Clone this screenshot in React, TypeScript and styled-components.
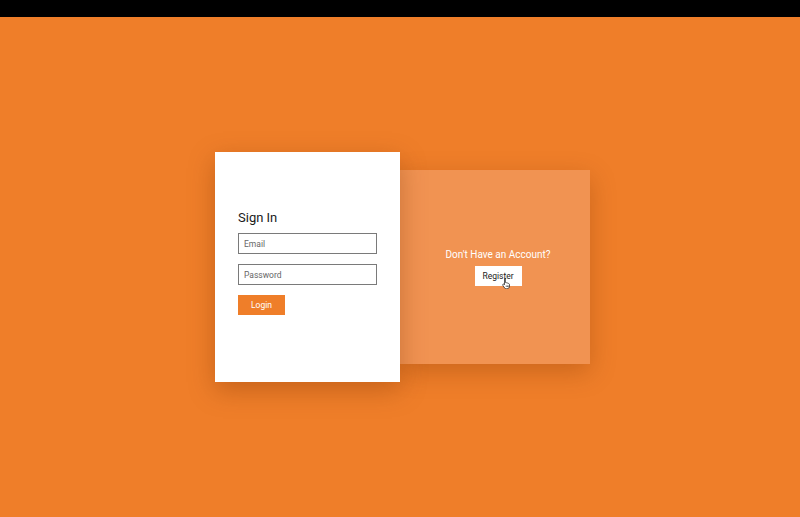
import React from 'react'
import styled, { createGlobalStyle } from 'styled-components'

const GlobalStyle = createGlobalStyle`
  html, body {
    margin: 0;
    padding: 0;
    background: #000;
    font-family: Roboto, "Noto Sans", sans-serif;
  }
`

const TopBar = styled.div`
  height: 17px;
  background: #000;
`

const Stage = styled.div`
  height: 500px;
  background: #ef7e29;
  display: flex;
  align-items: center;
  justify-content: center;
  padding-left: 5px;
  box-sizing: border-box;
`

const Wrapper = styled.div`
  display: flex;
  align-items: center;
`

const SignInCard = styled.div`
  position: relative;
  z-index: 2;
  width: 185px;
  height: 230px;
  background: #fff;
  box-shadow: 0 8px 24px rgba(120, 50, 0, 0.35);
  box-sizing: border-box;
  padding: 58px 23px 0;
  display: flex;
  flex-direction: column;
`

const Heading = styled.h2`
  margin: 0 0 7px;
  font-size: 13px;
  font-weight: 400;
  color: #1a1a1a;
  line-height: 16px;
`

const Field = styled.input`
  width: 139px;
  height: 21px;
  box-sizing: border-box;
  border: 1px solid #7a7a7a;
  padding: 0 5px;
  margin: 0 0 10px;
  font-family: inherit;
  font-size: 8.5px;
  color: #333;
  outline: none;
  &::placeholder {
    color: #666;
  }
`

const LoginButton = styled.button`
  width: 47px;
  height: 20px;
  border: none;
  background: #ef7e29;
  color: #fff;
  font-family: inherit;
  font-size: 8.5px;
  padding: 0;
  cursor: pointer;
`

const RegisterPanel = styled.div`
  position: relative;
  z-index: 1;
  width: 190px;
  height: 194px;
  background: #f19352;
  box-shadow: 0 8px 24px rgba(120, 50, 0, 0.3);
  display: flex;
  flex-direction: column;
  align-items: center;
  justify-content: center;
  padding-left: 6px;
  box-sizing: border-box;
`

const PanelText = styled.p`
  margin: 0 0 5px;
  color: #fff;
  font-size: 10px;
  font-weight: 400;
  line-height: 12px;
`

const RegisterButton = styled.button`
  position: relative;
  width: 47px;
  height: 20px;
  border: none;
  background: #fff;
  color: #1a1a1a;
  font-family: inherit;
  font-size: 8.5px;
  font-weight: 400;
  padding: 0;
  cursor: pointer;
`

const Cursor = styled.svg`
  position: absolute;
  left: 27px;
  top: 12px;
  width: 9px;
  height: 11px;
`

export default function App() {
  return (
    <>
      <GlobalStyle />
      <TopBar />
      <Stage>
        <Wrapper>
          <SignInCard>
            <Heading>Sign In</Heading>
            <Field placeholder="Email" />
            <Field type="password" placeholder="Password" />
            <LoginButton>Login</LoginButton>
          </SignInCard>
          <RegisterPanel>
            <PanelText>Don't Have an Account?</PanelText>
            <RegisterButton>
              Register
              <Cursor viewBox="0 0 18 22">
                <path
                  d="M5 1.5c1 0 1.8.8 1.8 1.8V9l.4-.1c.8-.2 1.6.1 2 .7.8-.3 1.7 0 2.1.7.8-.2 1.7.2 2 1 .9 0 1.7.8 1.7 1.7v3.5c0 2.9-2.3 5-5 5H8.5c-1.4 0-2.7-.7-3.5-1.8L1.6 14.6c-.5-.8-.3-1.8.5-2.3.7-.4 1.5-.3 2 .3l.9 1V3.3c0-1 .8-1.8 1.8-1.8z"
                  fill="#fff"
                  stroke="#111"
                  strokeWidth="1.4"
                  strokeLinejoin="round"
                />
                <path d="M8.5 15v3M11 15v3M13.5 15v3" stroke="#111" strokeWidth="1.2" />
              </Cursor>
            </RegisterButton>
          </RegisterPanel>
        </Wrapper>
      </Stage>
    </>
  )
}
